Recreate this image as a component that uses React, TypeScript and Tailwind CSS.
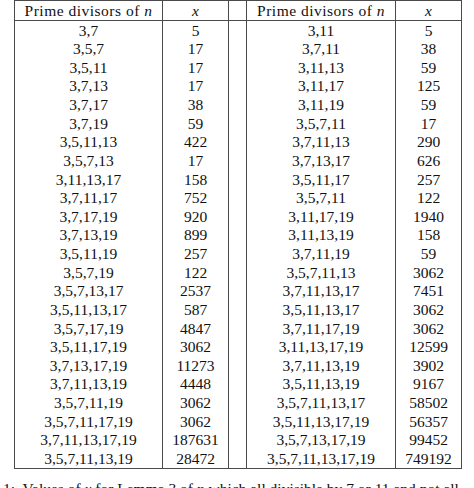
import React from "react";

const left: [string, string][] = [
  ["3,7", "5"],
  ["3,5,7", "17"],
  ["3,5,11", "17"],
  ["3,7,13", "17"],
  ["3,7,17", "38"],
  ["3,7,19", "59"],
  ["3,5,11,13", "422"],
  ["3,5,7,13", "17"],
  ["3,11,13,17", "158"],
  ["3,7,11,17", "752"],
  ["3,7,17,19", "920"],
  ["3,7,13,19", "899"],
  ["3,5,11,19", "257"],
  ["3,5,7,19", "122"],
  ["3,5,7,13,17", "2537"],
  ["3,5,11,13,17", "587"],
  ["3,5,7,17,19", "4847"],
  ["3,5,11,17,19", "3062"],
  ["3,7,13,17,19", "11273"],
  ["3,7,11,13,19", "4448"],
  ["3,5,7,11,19", "3062"],
  ["3,5,7,11,17,19", "3062"],
  ["3,7,11,13,17,19", "187631"],
  ["3,5,7,11,13,19", "28472"],
];

const right: [string, string][] = [
  ["3,11", "5"],
  ["3,7,11", "38"],
  ["3,11,13", "59"],
  ["3,11,17", "125"],
  ["3,11,19", "59"],
  ["3,5,7,11", "17"],
  ["3,7,11,13", "290"],
  ["3,7,13,17", "626"],
  ["3,5,11,17", "257"],
  ["3,5,7,11", "122"],
  ["3,11,17,19", "1940"],
  ["3,11,13,19", "158"],
  ["3,7,11,19", "59"],
  ["3,5,7,11,13", "3062"],
  ["3,7,11,13,17", "7451"],
  ["3,5,11,13,17", "3062"],
  ["3,7,11,17,19", "3062"],
  ["3,11,13,17,19", "12599"],
  ["3,7,11,13,19", "3902"],
  ["3,5,11,13,19", "9167"],
  ["3,5,7,11,13,17", "58502"],
  ["3,5,11,13,17,19", "56357"],
  ["3,5,7,13,17,19", "99452"],
  ["3,5,7,11,13,17,19", "749192"],
];

const grid = "grid grid-cols-[148px_66px_18px_149px_65px]";
const cell = "flex items-center justify-center border-r border-[#4a4a4a]";

export default function App() {
  return (
    <div className="w-[474px] h-[488px] overflow-hidden bg-white text-[#111] [font-family:'Liberation_Serif','Times_New_Roman',serif] text-[15.5px] leading-none">
      <div className="ml-[14px] w-[448px] border border-[#4a4a4a]">
        <div className={`${grid} h-[20px] border-b border-[#4a4a4a]`}>
          <div className={`${cell} tracking-[0.5px]`}>
            Prime divisors of&nbsp;<i>n</i>
          </div>
          <div className={cell}>
            <i>x</i>
          </div>
          <div className={cell}></div>
          <div className={`${cell} tracking-[0.5px]`}>
            Prime divisors of&nbsp;<i>n</i>
          </div>
          <div className="flex items-center justify-center">
            <i>x</i>
          </div>
        </div>
        {left.map((l, i) => (
          <div key={i} className={`${grid} h-[18.63px]`}>
            <div className={cell}>{l[0]}</div>
            <div className={cell}>{l[1]}</div>
            <div className={cell}></div>
            <div className={cell}>{right[i][0]}</div>
            <div className="flex items-center justify-center">{right[i][1]}</div>
          </div>
        ))}
      </div>
      <div className="mt-[11px] ml-[3px] whitespace-nowrap text-[15.5px] leading-[18px]">
        1:&nbsp; Values of <i>x</i> for Lemma 3 of <i>n</i> which all divisible by 7 or 11 and not all
      </div>
    </div>
  );
}
